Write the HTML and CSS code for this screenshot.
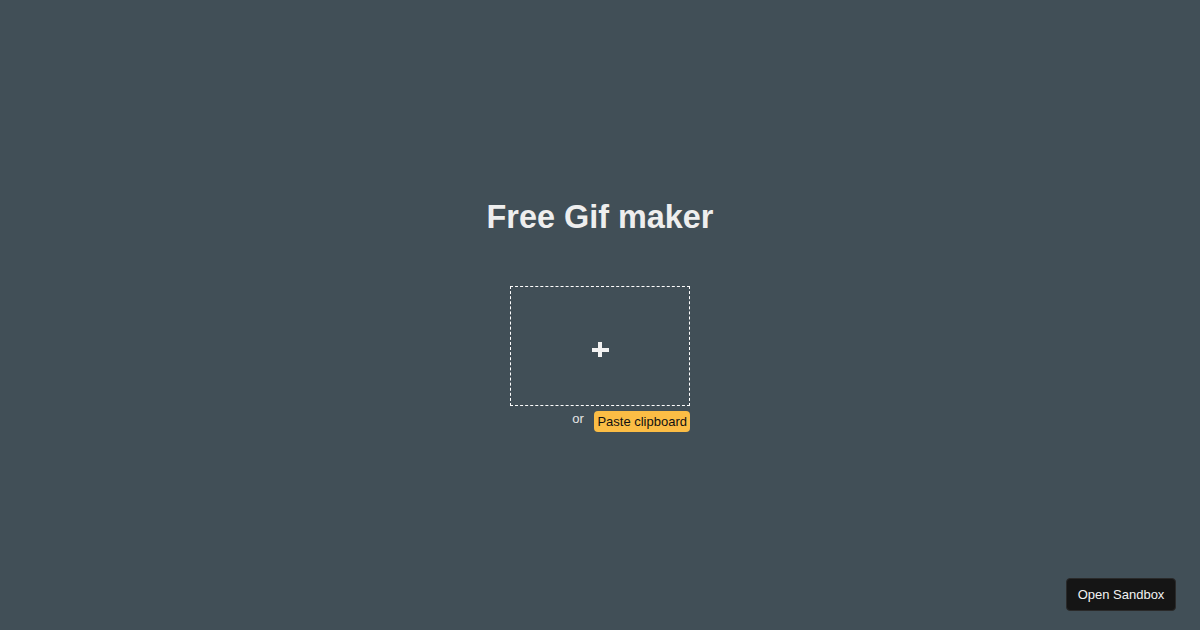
FILE: index.html
```html
<!DOCTYPE html>
<html lang="en">
<head>
<meta charset="utf-8">
<title>Free Gif maker</title>
<link rel="stylesheet" href="styles.css">
</head>
<body>
<main class="app">
  <h1 class="title">Free Gif maker</h1>
  <div class="dropzone"><span class="plus" aria-label="Add"></span></div>
  <div class="paste-row">
    <span class="or">or</span>
    <button class="paste-btn">Paste clipboard</button>
  </div>
</main>
<a class="sandbox-btn">Open Sandbox</a>
</body>
</html>
```

FILE: styles.css
```css
html, body {
  margin: 0;
  padding: 0;
}
body {
  background: #414f57;
  min-height: 100vh;
  font-family: "Liberation Sans", Arial, sans-serif;
}
.app {
  display: flex;
  flex-direction: column;
  align-items: center;
  padding-top: 197px;
}
.title {
  margin: 0;
  font-size: 32.4px;
  line-height: 40px;
  font-weight: bold;
  color: #eeeeee;
}
.dropzone {
  margin-top: 49px;
  width: 180px;
  height: 120px;
  box-sizing: border-box;
  border: 1px dashed #ffffff;
  display: flex;
  align-items: center;
  justify-content: center;
}
.plus {
  position: relative;
  width: 17px;
  height: 15px;
  margin-top: 7px;
}
.plus::before,
.plus::after {
  content: "";
  position: absolute;
  background: #f2f2f2;
}
.plus::before {
  left: 0;
  top: 5.5px;
  width: 17px;
  height: 4px;
}
.plus::after {
  left: 6.5px;
  top: 0;
  width: 4px;
  height: 15px;
}
.paste-row {
  width: 180px;
  margin-top: 5px;
  display: flex;
  justify-content: flex-end;
  align-items: flex-start;
  gap: 10px;
}
.or {
  color: #e6e6e6;
  font-size: 13px;
  line-height: 15px;
  margin-top: 0;
}
.paste-btn {
  background: #fbbd45;
  color: #111111;
  border: none;
  border-radius: 4px;
  font-family: "Liberation Sans", Arial, sans-serif;
  font-size: 13px;
  line-height: 15px;
  padding: 3px 3px 3px 3.5px;
  margin: 0;
}
.sandbox-btn {
  position: fixed;
  right: 24px;
  bottom: 19px;
  width: 110px;
  height: 33px;
  box-sizing: border-box;
  display: flex;
  align-items: center;
  justify-content: center;
  background: #151515;
  color: #f2f2f2;
  font-size: 13px;
  border: 1px solid #2a2a2a;
  border-radius: 4px;
}
```
